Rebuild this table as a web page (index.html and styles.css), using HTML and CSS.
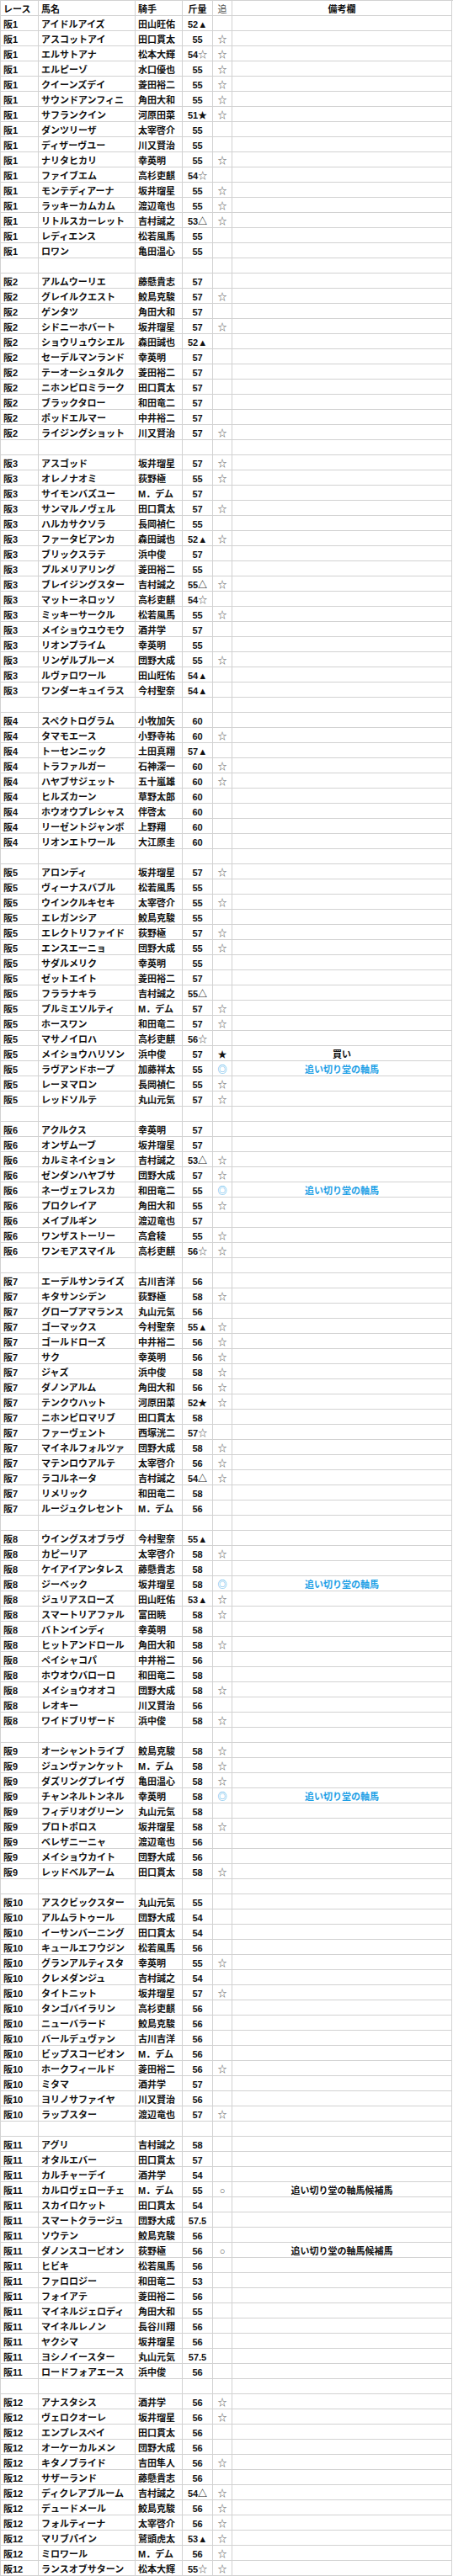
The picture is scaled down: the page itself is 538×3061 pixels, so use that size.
FILE: index.html
```html
<!DOCTYPE html>
<html lang="ja">
<head>
<meta charset="utf-8">
<title>出走表</title>
<link rel="stylesheet" href="styles.css">
</head>
<body>
<div class="sheet">
<div class="row head"><span>レース</span><span>馬名</span><span>騎手</span><span class="wt">斤量</span><span class="mk">追</span><span class="nt">備考欄</span></div>
<div class="row"><span>阪1</span><span>アイドルアイズ</span><span>田山旺佑</span><span class="wt">52▲</span><span class="mk"></span><span class="nt"></span></div>
<div class="row"><span>阪1</span><span>アスコットアイ</span><span>田口貫太</span><span class="wt">55</span><span class="mk">☆</span><span class="nt"></span></div>
<div class="row"><span>阪1</span><span>エルサトアナ</span><span>松本大輝</span><span class="wt">54<i>☆</i></span><span class="mk">☆</span><span class="nt"></span></div>
<div class="row"><span>阪1</span><span>エルピーゾ</span><span>水口優也</span><span class="wt">55</span><span class="mk">☆</span><span class="nt"></span></div>
<div class="row"><span>阪1</span><span>クイーンズデイ</span><span>菱田裕二</span><span class="wt">55</span><span class="mk">☆</span><span class="nt"></span></div>
<div class="row"><span>阪1</span><span>サウンドアンフィニ</span><span>角田大和</span><span class="wt">55</span><span class="mk">☆</span><span class="nt"></span></div>
<div class="row"><span>阪1</span><span>サフランクイン</span><span>河原田菜</span><span class="wt">51★</span><span class="mk">☆</span><span class="nt"></span></div>
<div class="row"><span>阪1</span><span>ダンツリーザ</span><span>太宰啓介</span><span class="wt">55</span><span class="mk"></span><span class="nt"></span></div>
<div class="row"><span>阪1</span><span>ディザーヴユー</span><span>川又賢治</span><span class="wt">55</span><span class="mk"></span><span class="nt"></span></div>
<div class="row"><span>阪1</span><span>ナリタヒカリ</span><span>幸英明</span><span class="wt">55</span><span class="mk">☆</span><span class="nt"></span></div>
<div class="row"><span>阪1</span><span>ファイブエム</span><span>高杉吏麒</span><span class="wt">54<i>☆</i></span><span class="mk"></span><span class="nt"></span></div>
<div class="row"><span>阪1</span><span>モンテディアーナ</span><span>坂井瑠星</span><span class="wt">55</span><span class="mk">☆</span><span class="nt"></span></div>
<div class="row"><span>阪1</span><span>ラッキーカムカム</span><span>渡辺竜也</span><span class="wt">55</span><span class="mk">☆</span><span class="nt"></span></div>
<div class="row"><span>阪1</span><span>リトルスカーレット</span><span>吉村誠之</span><span class="wt">53△</span><span class="mk">☆</span><span class="nt"></span></div>
<div class="row"><span>阪1</span><span>レディエンス</span><span>松若風馬</span><span class="wt">55</span><span class="mk"></span><span class="nt"></span></div>
<div class="row"><span>阪1</span><span>ロワン</span><span>亀田温心</span><span class="wt">55</span><span class="mk"></span><span class="nt"></span></div>
<div class="row"><span></span><span></span><span></span><span class="wt"></span><span class="mk"></span><span class="nt"></span></div>
<div class="row"><span>阪2</span><span>アルムウーリエ</span><span>藤懸貴志</span><span class="wt">57</span><span class="mk"></span><span class="nt"></span></div>
<div class="row"><span>阪2</span><span>グレイルクエスト</span><span>鮫島克駿</span><span class="wt">57</span><span class="mk">☆</span><span class="nt"></span></div>
<div class="row"><span>阪2</span><span>ゲンタツ</span><span>角田大和</span><span class="wt">57</span><span class="mk"></span><span class="nt"></span></div>
<div class="row"><span>阪2</span><span>シドニーホバート</span><span>坂井瑠星</span><span class="wt">57</span><span class="mk">☆</span><span class="nt"></span></div>
<div class="row"><span>阪2</span><span>ショウリュウシエル</span><span>森田誠也</span><span class="wt">52▲</span><span class="mk"></span><span class="nt"></span></div>
<div class="row"><span>阪2</span><span>セーデルマンランド</span><span>幸英明</span><span class="wt">57</span><span class="mk"></span><span class="nt"></span></div>
<div class="row"><span>阪2</span><span>テーオーシュタルク</span><span>菱田裕二</span><span class="wt">57</span><span class="mk"></span><span class="nt"></span></div>
<div class="row"><span>阪2</span><span>ニホンピロミラーク</span><span>田口貫太</span><span class="wt">57</span><span class="mk"></span><span class="nt"></span></div>
<div class="row"><span>阪2</span><span>ブラックタロー</span><span>和田竜二</span><span class="wt">57</span><span class="mk"></span><span class="nt"></span></div>
<div class="row"><span>阪2</span><span>ポッドエルマー</span><span>中井裕二</span><span class="wt">57</span><span class="mk"></span><span class="nt"></span></div>
<div class="row"><span>阪2</span><span>ライジングショット</span><span>川又賢治</span><span class="wt">57</span><span class="mk">☆</span><span class="nt"></span></div>
<div class="row"><span></span><span></span><span></span><span class="wt"></span><span class="mk"></span><span class="nt"></span></div>
<div class="row"><span>阪3</span><span>アスゴッド</span><span>坂井瑠星</span><span class="wt">57</span><span class="mk">☆</span><span class="nt"></span></div>
<div class="row"><span>阪3</span><span>オレノナオミ</span><span>荻野極</span><span class="wt">55</span><span class="mk">☆</span><span class="nt"></span></div>
<div class="row"><span>阪3</span><span>サイモンバズユー</span><span>M．デム</span><span class="wt">57</span><span class="mk"></span><span class="nt"></span></div>
<div class="row"><span>阪3</span><span>サンマルノヴェル</span><span>田口貫太</span><span class="wt">57</span><span class="mk">☆</span><span class="nt"></span></div>
<div class="row"><span>阪3</span><span>ハルカサクソラ</span><span>長岡禎仁</span><span class="wt">55</span><span class="mk"></span><span class="nt"></span></div>
<div class="row"><span>阪3</span><span>ファータビアンカ</span><span>森田誠也</span><span class="wt">52▲</span><span class="mk">☆</span><span class="nt"></span></div>
<div class="row"><span>阪3</span><span>ブリックスラテ</span><span>浜中俊</span><span class="wt">57</span><span class="mk"></span><span class="nt"></span></div>
<div class="row"><span>阪3</span><span>プルメリアリング</span><span>菱田裕二</span><span class="wt">55</span><span class="mk"></span><span class="nt"></span></div>
<div class="row"><span>阪3</span><span>ブレイジングスター</span><span>吉村誠之</span><span class="wt">55△</span><span class="mk">☆</span><span class="nt"></span></div>
<div class="row"><span>阪3</span><span>マットーネロッソ</span><span>高杉吏麒</span><span class="wt">54<i>☆</i></span><span class="mk"></span><span class="nt"></span></div>
<div class="row"><span>阪3</span><span>ミッキーサークル</span><span>松若風馬</span><span class="wt">55</span><span class="mk">☆</span><span class="nt"></span></div>
<div class="row"><span>阪3</span><span>メイショウユウモウ</span><span>酒井学</span><span class="wt">57</span><span class="mk"></span><span class="nt"></span></div>
<div class="row"><span>阪3</span><span>リオンプライム</span><span>幸英明</span><span class="wt">55</span><span class="mk"></span><span class="nt"></span></div>
<div class="row"><span>阪3</span><span>リンゲルブルーメ</span><span>団野大成</span><span class="wt">55</span><span class="mk">☆</span><span class="nt"></span></div>
<div class="row"><span>阪3</span><span>ルヴァロワール</span><span>田山旺佑</span><span class="wt">54▲</span><span class="mk"></span><span class="nt"></span></div>
<div class="row"><span>阪3</span><span>ワンダーキュイラス</span><span>今村聖奈</span><span class="wt">54▲</span><span class="mk"></span><span class="nt"></span></div>
<div class="row"><span></span><span></span><span></span><span class="wt"></span><span class="mk"></span><span class="nt"></span></div>
<div class="row"><span>阪4</span><span>スペクトログラム</span><span>小牧加矢</span><span class="wt">60</span><span class="mk"></span><span class="nt"></span></div>
<div class="row"><span>阪4</span><span>タマモエース</span><span>小野寺祐</span><span class="wt">60</span><span class="mk">☆</span><span class="nt"></span></div>
<div class="row"><span>阪4</span><span>トーセンニック</span><span>土田真翔</span><span class="wt">57▲</span><span class="mk"></span><span class="nt"></span></div>
<div class="row"><span>阪4</span><span>トラファルガー</span><span>石神深一</span><span class="wt">60</span><span class="mk">☆</span><span class="nt"></span></div>
<div class="row"><span>阪4</span><span>ハヤブサジェット</span><span>五十嵐雄</span><span class="wt">60</span><span class="mk">☆</span><span class="nt"></span></div>
<div class="row"><span>阪4</span><span>ヒルズカーン</span><span>草野太郎</span><span class="wt">60</span><span class="mk"></span><span class="nt"></span></div>
<div class="row"><span>阪4</span><span>ホウオウプレシャス</span><span>伴啓太</span><span class="wt">60</span><span class="mk"></span><span class="nt"></span></div>
<div class="row"><span>阪4</span><span>リーゼントジャンボ</span><span>上野翔</span><span class="wt">60</span><span class="mk"></span><span class="nt"></span></div>
<div class="row"><span>阪4</span><span>リオンエトワール</span><span>大江原圭</span><span class="wt">60</span><span class="mk"></span><span class="nt"></span></div>
<div class="row"><span></span><span></span><span></span><span class="wt"></span><span class="mk"></span><span class="nt"></span></div>
<div class="row"><span>阪5</span><span>アロンディ</span><span>坂井瑠星</span><span class="wt">57</span><span class="mk">☆</span><span class="nt"></span></div>
<div class="row"><span>阪5</span><span>ヴィーナスバブル</span><span>松若風馬</span><span class="wt">55</span><span class="mk"></span><span class="nt"></span></div>
<div class="row"><span>阪5</span><span>ウインクルキセキ</span><span>太宰啓介</span><span class="wt">55</span><span class="mk">☆</span><span class="nt"></span></div>
<div class="row"><span>阪5</span><span>エレガンシア</span><span>鮫島克駿</span><span class="wt">55</span><span class="mk"></span><span class="nt"></span></div>
<div class="row"><span>阪5</span><span>エレクトリファイド</span><span>荻野極</span><span class="wt">57</span><span class="mk">☆</span><span class="nt"></span></div>
<div class="row"><span>阪5</span><span>エンスエーニョ</span><span>団野大成</span><span class="wt">55</span><span class="mk">☆</span><span class="nt"></span></div>
<div class="row"><span>阪5</span><span>サダルメリク</span><span>幸英明</span><span class="wt">55</span><span class="mk"></span><span class="nt"></span></div>
<div class="row"><span>阪5</span><span>ゼットエイト</span><span>菱田裕二</span><span class="wt">57</span><span class="mk"></span><span class="nt"></span></div>
<div class="row"><span>阪5</span><span>フララナキラ</span><span>吉村誠之</span><span class="wt">55△</span><span class="mk"></span><span class="nt"></span></div>
<div class="row"><span>阪5</span><span>プルミエソルティ</span><span>M．デム</span><span class="wt">57</span><span class="mk">☆</span><span class="nt"></span></div>
<div class="row"><span>阪5</span><span>ホースワン</span><span>和田竜二</span><span class="wt">57</span><span class="mk">☆</span><span class="nt"></span></div>
<div class="row"><span>阪5</span><span>マサノイロハ</span><span>高杉吏麒</span><span class="wt">56<i>☆</i></span><span class="mk"></span><span class="nt"></span></div>
<div class="row"><span>阪5</span><span>メイショウハリソン</span><span>浜中俊</span><span class="wt">57</span><span class="mk solid">★</span><span class="nt">買い</span></div>
<div class="row"><span>阪5</span><span>ラヴアンドホープ</span><span>加藤祥太</span><span class="wt">55</span><span class="mk blue">◎</span><span class="nt blue">追い切り堂の軸馬</span></div>
<div class="row"><span>阪5</span><span>レーヌマロン</span><span>長岡禎仁</span><span class="wt">55</span><span class="mk">☆</span><span class="nt"></span></div>
<div class="row"><span>阪5</span><span>レッドソルテ</span><span>丸山元気</span><span class="wt">57</span><span class="mk">☆</span><span class="nt"></span></div>
<div class="row"><span></span><span></span><span></span><span class="wt"></span><span class="mk"></span><span class="nt"></span></div>
<div class="row"><span>阪6</span><span>アクルクス</span><span>幸英明</span><span class="wt">57</span><span class="mk"></span><span class="nt"></span></div>
<div class="row"><span>阪6</span><span>オンザムーブ</span><span>坂井瑠星</span><span class="wt">57</span><span class="mk"></span><span class="nt"></span></div>
<div class="row"><span>阪6</span><span>カルミネイション</span><span>吉村誠之</span><span class="wt">53△</span><span class="mk">☆</span><span class="nt"></span></div>
<div class="row"><span>阪6</span><span>ゼンダンハヤブサ</span><span>団野大成</span><span class="wt">57</span><span class="mk">☆</span><span class="nt"></span></div>
<div class="row"><span>阪6</span><span>ネーヴェフレスカ</span><span>和田竜二</span><span class="wt">55</span><span class="mk blue">◎</span><span class="nt blue">追い切り堂の軸馬</span></div>
<div class="row"><span>阪6</span><span>プロクレイア</span><span>角田大和</span><span class="wt">55</span><span class="mk">☆</span><span class="nt"></span></div>
<div class="row"><span>阪6</span><span>メイプルギン</span><span>渡辺竜也</span><span class="wt">57</span><span class="mk"></span><span class="nt"></span></div>
<div class="row"><span>阪6</span><span>ワンザストーリー</span><span>高倉稜</span><span class="wt">55</span><span class="mk">☆</span><span class="nt"></span></div>
<div class="row"><span>阪6</span><span>ワンモアスマイル</span><span>高杉吏麒</span><span class="wt">56<i>☆</i></span><span class="mk">☆</span><span class="nt"></span></div>
<div class="row"><span></span><span></span><span></span><span class="wt"></span><span class="mk"></span><span class="nt"></span></div>
<div class="row"><span>阪7</span><span>エーデルサンライズ</span><span>古川吉洋</span><span class="wt">56</span><span class="mk"></span><span class="nt"></span></div>
<div class="row"><span>阪7</span><span>キタサンシデン</span><span>荻野極</span><span class="wt">58</span><span class="mk">☆</span><span class="nt"></span></div>
<div class="row"><span>阪7</span><span>グロープアマランス</span><span>丸山元気</span><span class="wt">56</span><span class="mk"></span><span class="nt"></span></div>
<div class="row"><span>阪7</span><span>ゴーマックス</span><span>今村聖奈</span><span class="wt">55▲</span><span class="mk">☆</span><span class="nt"></span></div>
<div class="row"><span>阪7</span><span>ゴールドローズ</span><span>中井裕二</span><span class="wt">56</span><span class="mk">☆</span><span class="nt"></span></div>
<div class="row"><span>阪7</span><span>サク</span><span>幸英明</span><span class="wt">56</span><span class="mk">☆</span><span class="nt"></span></div>
<div class="row"><span>阪7</span><span>ジャズ</span><span>浜中俊</span><span class="wt">58</span><span class="mk">☆</span><span class="nt"></span></div>
<div class="row"><span>阪7</span><span>ダノンアルム</span><span>角田大和</span><span class="wt">56</span><span class="mk">☆</span><span class="nt"></span></div>
<div class="row"><span>阪7</span><span>テンクウハット</span><span>河原田菜</span><span class="wt">52★</span><span class="mk">☆</span><span class="nt"></span></div>
<div class="row"><span>阪7</span><span>ニホンピロマリブ</span><span>田口貫太</span><span class="wt">58</span><span class="mk"></span><span class="nt"></span></div>
<div class="row"><span>阪7</span><span>ファーヴェント</span><span>西塚洸二</span><span class="wt">57<i>☆</i></span><span class="mk"></span><span class="nt"></span></div>
<div class="row"><span>阪7</span><span>マイネルフォルツァ</span><span>団野大成</span><span class="wt">58</span><span class="mk">☆</span><span class="nt"></span></div>
<div class="row"><span>阪7</span><span>マテンロウアルテ</span><span>太宰啓介</span><span class="wt">56</span><span class="mk">☆</span><span class="nt"></span></div>
<div class="row"><span>阪7</span><span>ラコルネータ</span><span>吉村誠之</span><span class="wt">54△</span><span class="mk">☆</span><span class="nt"></span></div>
<div class="row"><span>阪7</span><span>リメリック</span><span>和田竜二</span><span class="wt">58</span><span class="mk"></span><span class="nt"></span></div>
<div class="row"><span>阪7</span><span>ルージュクレセント</span><span>M．デム</span><span class="wt">56</span><span class="mk"></span><span class="nt"></span></div>
<div class="row"><span></span><span></span><span></span><span class="wt"></span><span class="mk"></span><span class="nt"></span></div>
<div class="row"><span>阪8</span><span>ウイングスオブラヴ</span><span>今村聖奈</span><span class="wt">55▲</span><span class="mk"></span><span class="nt"></span></div>
<div class="row"><span>阪8</span><span>カピーリア</span><span>太宰啓介</span><span class="wt">58</span><span class="mk">☆</span><span class="nt"></span></div>
<div class="row"><span>阪8</span><span>ケイアイアンタレス</span><span>藤懸貴志</span><span class="wt">58</span><span class="mk"></span><span class="nt"></span></div>
<div class="row"><span>阪8</span><span>ジーベック</span><span>坂井瑠星</span><span class="wt">58</span><span class="mk blue">◎</span><span class="nt blue">追い切り堂の軸馬</span></div>
<div class="row"><span>阪8</span><span>ジュリアスローズ</span><span>田山旺佑</span><span class="wt">53▲</span><span class="mk">☆</span><span class="nt"></span></div>
<div class="row"><span>阪8</span><span>スマートリアファル</span><span>富田暁</span><span class="wt">58</span><span class="mk">☆</span><span class="nt"></span></div>
<div class="row"><span>阪8</span><span>バトンインディ</span><span>幸英明</span><span class="wt">58</span><span class="mk"></span><span class="nt"></span></div>
<div class="row"><span>阪8</span><span>ヒットアンドロール</span><span>角田大和</span><span class="wt">58</span><span class="mk">☆</span><span class="nt"></span></div>
<div class="row"><span>阪8</span><span>ペイシャコパ</span><span>中井裕二</span><span class="wt">56</span><span class="mk"></span><span class="nt"></span></div>
<div class="row"><span>阪8</span><span>ホウオウバローロ</span><span>和田竜二</span><span class="wt">58</span><span class="mk"></span><span class="nt"></span></div>
<div class="row"><span>阪8</span><span>メイショウオオコ</span><span>団野大成</span><span class="wt">58</span><span class="mk">☆</span><span class="nt"></span></div>
<div class="row"><span>阪8</span><span>レオキー</span><span>川又賢治</span><span class="wt">56</span><span class="mk"></span><span class="nt"></span></div>
<div class="row"><span>阪8</span><span>ワイドブリザード</span><span>浜中俊</span><span class="wt">58</span><span class="mk">☆</span><span class="nt"></span></div>
<div class="row"><span></span><span></span><span></span><span class="wt"></span><span class="mk"></span><span class="nt"></span></div>
<div class="row"><span>阪9</span><span>オーシャントライブ</span><span>鮫島克駿</span><span class="wt">58</span><span class="mk">☆</span><span class="nt"></span></div>
<div class="row"><span>阪9</span><span>ジュンヴァンケット</span><span>M．デム</span><span class="wt">58</span><span class="mk">☆</span><span class="nt"></span></div>
<div class="row"><span>阪9</span><span>ダズリングブレイヴ</span><span>亀田温心</span><span class="wt">58</span><span class="mk">☆</span><span class="nt"></span></div>
<div class="row"><span>阪9</span><span>チャンネルトンネル</span><span>幸英明</span><span class="wt">58</span><span class="mk blue">◎</span><span class="nt blue">追い切り堂の軸馬</span></div>
<div class="row"><span>阪9</span><span>フィデリオグリーン</span><span>丸山元気</span><span class="wt">58</span><span class="mk"></span><span class="nt"></span></div>
<div class="row"><span>阪9</span><span>プロトポロス</span><span>坂井瑠星</span><span class="wt">58</span><span class="mk">☆</span><span class="nt"></span></div>
<div class="row"><span>阪9</span><span>ベレザニーニャ</span><span>渡辺竜也</span><span class="wt">56</span><span class="mk"></span><span class="nt"></span></div>
<div class="row"><span>阪9</span><span>メイショウカイト</span><span>団野大成</span><span class="wt">56</span><span class="mk"></span><span class="nt"></span></div>
<div class="row"><span>阪9</span><span>レッドベルアーム</span><span>田口貫太</span><span class="wt">58</span><span class="mk">☆</span><span class="nt"></span></div>
<div class="row"><span></span><span></span><span></span><span class="wt"></span><span class="mk"></span><span class="nt"></span></div>
<div class="row"><span>阪10</span><span>アスクビックスター</span><span>丸山元気</span><span class="wt">55</span><span class="mk"></span><span class="nt"></span></div>
<div class="row"><span>阪10</span><span>アルムラトゥール</span><span>団野大成</span><span class="wt">54</span><span class="mk"></span><span class="nt"></span></div>
<div class="row"><span>阪10</span><span>イーサンバーニング</span><span>田口貫太</span><span class="wt">54</span><span class="mk"></span><span class="nt"></span></div>
<div class="row"><span>阪10</span><span>キュールエフウジン</span><span>松若風馬</span><span class="wt">56</span><span class="mk"></span><span class="nt"></span></div>
<div class="row"><span>阪10</span><span>グランアルティスタ</span><span>幸英明</span><span class="wt">55</span><span class="mk">☆</span><span class="nt"></span></div>
<div class="row"><span>阪10</span><span>クレメダンジュ</span><span>吉村誠之</span><span class="wt">54</span><span class="mk"></span><span class="nt"></span></div>
<div class="row"><span>阪10</span><span>タイトニット</span><span>坂井瑠星</span><span class="wt">57</span><span class="mk">☆</span><span class="nt"></span></div>
<div class="row"><span>阪10</span><span>タンゴバイラリン</span><span>高杉吏麒</span><span class="wt">56</span><span class="mk"></span><span class="nt"></span></div>
<div class="row"><span>阪10</span><span>ニューバラード</span><span>鮫島克駿</span><span class="wt">56</span><span class="mk"></span><span class="nt"></span></div>
<div class="row"><span>阪10</span><span>バールデュヴァン</span><span>古川吉洋</span><span class="wt">56</span><span class="mk"></span><span class="nt"></span></div>
<div class="row"><span>阪10</span><span>ビップスコーピオン</span><span>M．デム</span><span class="wt">56</span><span class="mk"></span><span class="nt"></span></div>
<div class="row"><span>阪10</span><span>ホークフィールド</span><span>菱田裕二</span><span class="wt">56</span><span class="mk">☆</span><span class="nt"></span></div>
<div class="row"><span>阪10</span><span>ミタマ</span><span>酒井学</span><span class="wt">57</span><span class="mk"></span><span class="nt"></span></div>
<div class="row"><span>阪10</span><span>ヨリノサファイヤ</span><span>川又賢治</span><span class="wt">56</span><span class="mk"></span><span class="nt"></span></div>
<div class="row"><span>阪10</span><span>ラップスター</span><span>渡辺竜也</span><span class="wt">57</span><span class="mk">☆</span><span class="nt"></span></div>
<div class="row"><span></span><span></span><span></span><span class="wt"></span><span class="mk"></span><span class="nt"></span></div>
<div class="row"><span>阪11</span><span>アグリ</span><span>吉村誠之</span><span class="wt">58</span><span class="mk"></span><span class="nt"></span></div>
<div class="row"><span>阪11</span><span>オタルエバー</span><span>田口貫太</span><span class="wt">57</span><span class="mk"></span><span class="nt"></span></div>
<div class="row"><span>阪11</span><span>カルチャーデイ</span><span>酒井学</span><span class="wt">54</span><span class="mk"></span><span class="nt"></span></div>
<div class="row"><span>阪11</span><span>カルロヴェローチェ</span><span>M．デム</span><span class="wt">55</span><span class="mk">○</span><span class="nt">追い切り堂の軸馬候補馬</span></div>
<div class="row"><span>阪11</span><span>スカイロケット</span><span>田口貫太</span><span class="wt">54</span><span class="mk"></span><span class="nt"></span></div>
<div class="row"><span>阪11</span><span>スマートクラージュ</span><span>団野大成</span><span class="wt">57.5</span><span class="mk"></span><span class="nt"></span></div>
<div class="row"><span>阪11</span><span>ソウテン</span><span>鮫島克駿</span><span class="wt">56</span><span class="mk"></span><span class="nt"></span></div>
<div class="row"><span>阪11</span><span>ダノンスコーピオン</span><span>荻野極</span><span class="wt">56</span><span class="mk">○</span><span class="nt">追い切り堂の軸馬候補馬</span></div>
<div class="row"><span>阪11</span><span>ヒビキ</span><span>松若風馬</span><span class="wt">56</span><span class="mk"></span><span class="nt"></span></div>
<div class="row"><span>阪11</span><span>ファロロジー</span><span>和田竜二</span><span class="wt">53</span><span class="mk"></span><span class="nt"></span></div>
<div class="row"><span>阪11</span><span>フォイアテ</span><span>菱田裕二</span><span class="wt">56</span><span class="mk"></span><span class="nt"></span></div>
<div class="row"><span>阪11</span><span>マイネルジェロディ</span><span>角田大和</span><span class="wt">55</span><span class="mk"></span><span class="nt"></span></div>
<div class="row"><span>阪11</span><span>マイネルレノン</span><span>長谷川翔</span><span class="wt">56</span><span class="mk"></span><span class="nt"></span></div>
<div class="row"><span>阪11</span><span>ヤクシマ</span><span>坂井瑠星</span><span class="wt">56</span><span class="mk"></span><span class="nt"></span></div>
<div class="row"><span>阪11</span><span>ヨシノイースター</span><span>丸山元気</span><span class="wt">57.5</span><span class="mk"></span><span class="nt"></span></div>
<div class="row"><span>阪11</span><span>ロードフォアエース</span><span>浜中俊</span><span class="wt">56</span><span class="mk"></span><span class="nt"></span></div>
<div class="row"><span></span><span></span><span></span><span class="wt"></span><span class="mk"></span><span class="nt"></span></div>
<div class="row"><span>阪12</span><span>アナスタシス</span><span>酒井学</span><span class="wt">56</span><span class="mk">☆</span><span class="nt"></span></div>
<div class="row"><span>阪12</span><span>ヴェロクオーレ</span><span>坂井瑠星</span><span class="wt">56</span><span class="mk">☆</span><span class="nt"></span></div>
<div class="row"><span>阪12</span><span>エンプレスペイ</span><span>田口貫太</span><span class="wt">56</span><span class="mk"></span><span class="nt"></span></div>
<div class="row"><span>阪12</span><span>オーケーカルメン</span><span>団野大成</span><span class="wt">56</span><span class="mk"></span><span class="nt"></span></div>
<div class="row"><span>阪12</span><span>キタノブライド</span><span>吉田隼人</span><span class="wt">56</span><span class="mk">☆</span><span class="nt"></span></div>
<div class="row"><span>阪12</span><span>サザーランド</span><span>藤懸貴志</span><span class="wt">56</span><span class="mk"></span><span class="nt"></span></div>
<div class="row"><span>阪12</span><span>ディクレアブルーム</span><span>吉村誠之</span><span class="wt">54△</span><span class="mk">☆</span><span class="nt"></span></div>
<div class="row"><span>阪12</span><span>デュードメール</span><span>鮫島克駿</span><span class="wt">56</span><span class="mk">☆</span><span class="nt"></span></div>
<div class="row"><span>阪12</span><span>フォルティーナ</span><span>太宰啓介</span><span class="wt">56</span><span class="mk">☆</span><span class="nt"></span></div>
<div class="row"><span>阪12</span><span>マリブパイン</span><span>鷲頭虎太</span><span class="wt">53▲</span><span class="mk">☆</span><span class="nt"></span></div>
<div class="row"><span>阪12</span><span>ミロワール</span><span>M．デム</span><span class="wt">56</span><span class="mk">☆</span><span class="nt"></span></div>
<div class="row"><span>阪12</span><span>ランスオブサターン</span><span>松本大輝</span><span class="wt">55<i>☆</i></span><span class="mk">☆</span><span class="nt"></span></div>
</div>
</body>
</html>
```

FILE: styles.css
```css
html, body {
  margin: 0;
  padding: 0;
  background: #ffffff;
}

.sheet {
  width: 537px;
  border-top: 1px solid #d2d2d2;
  border-left: 1px solid #d2d2d2;
  font-family: "Liberation Sans", "Noto Sans CJK JP", sans-serif;
  font-size: 11px;
  font-weight: 700;
  color: #111111;
}

.row {
  display: grid;
  grid-template-columns: 45px 115px 56px 36px 23px 261px;
}

.row > span {
  box-sizing: border-box;
  height: 18px;
  padding: 4px 3px 0 3px;
  line-height: 13px;
  border-right: 1px solid #d2d2d2;
  border-bottom: 1px solid #d2d2d2;
  white-space: nowrap;
  overflow: hidden;
}

.row > .wt,
.row > .mk,
.row > .nt {
  text-align: center;
  padding-left: 0;
  padding-right: 0;
}

.wt i {
  font-style: normal;
  font-weight: 400;
  color: #555555;
}

.mk {
  font-weight: 400;
  color: #555555;
}

.mk.solid {
  color: #111111;
}

.blue {
  color: #1ea0e6;
}
```
